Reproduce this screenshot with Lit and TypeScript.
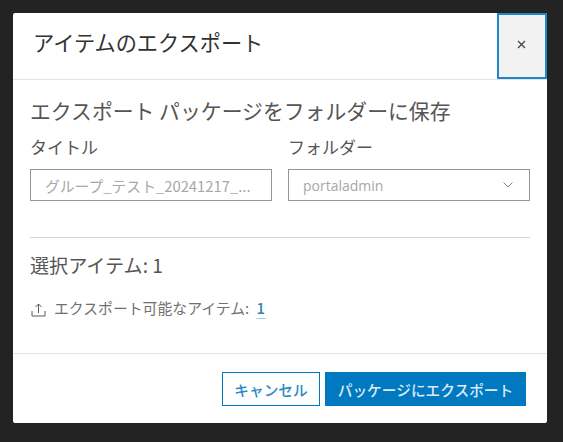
import { LitElement, html, css } from "lit";
import { customElement } from "lit/decorators.js";

@customElement("app-root")
export class AppRoot extends LitElement {
  static styles = css`
    :host {
      display: block;
      width: 563px;
      height: 442px;
      box-sizing: border-box;
      background: #232323;
      padding: 13px 16px 19px 13px;
      font-family: "Noto Sans CJK JP", "Noto Sans", sans-serif;
      color: #4a4a4a;
    }
    .dialog {
      height: 100%;
      background: #fff;
      border-radius: 2px;
      display: flex;
      flex-direction: column;
    }
    .header {
      display: flex;
      height: 66px;
      flex: none;
      border-bottom: 1px solid #e4e4e4;
    }
    .title {
      flex: 1;
      padding: 11px 0 0 20px;
      font-size: 21.2px;
      line-height: 36px;
      color: #323232;
    }
    .close {
      width: 50px;
      height: 66px;
      box-sizing: border-box;
      border: 2px solid #1f86c8;
      background: #f2f2f2;
      display: flex;
      align-items: center;
      justify-content: center;
      padding: 0 2px 4px 0;
    }
    .body {
      flex: 1;
      padding: 16px 17px 0 17px;
      display: flex;
      flex-direction: column;
      border-bottom: 1px solid #e4e4e4;
    }
    h2 {
      margin: 0;
      font-size: 20.85px;
      line-height: 28px;
      font-weight: 400;
      color: #555;
    }
    .fields {
      display: grid;
      grid-template-columns: 242px 242px;
      gap: 16px;
      margin-top: 11px;
    }
    label {
      display: block;
      font-size: 17px;
      line-height: 24px;
      color: #555;
      margin-bottom: 10px;
    }
    .box {
      height: 32px;
      box-sizing: border-box;
      border: 1px solid #959595;
      display: flex;
      align-items: center;
      justify-content: space-between;
      padding: 0 16px 0 14px;
      font-size: 14.8px;
      color: #a8a8a8;
      white-space: nowrap;
    }
    .box.latin {
      font-size: 14px;
      font-family: "Open Sans", "Noto Sans", sans-serif;
    }
    .rule {
      height: 0;
      border-top: 1.5px solid #d4d4d4;
      margin-top: 36px;
    }
    .count {
      font-size: 19.1px;
      line-height: 26px;
      margin-top: 14px;
      color: #555;
    }
    .exportable {
      display: flex;
      align-items: center;
      gap: 8px;
      margin-top: 20px;
      font-size: 14.85px;
      line-height: 20px;
      color: #707070;
    }
    .exportable svg {
      margin: 2px 0 0 1px;
      flex: none;
    }
    .link {
      color: #2f7fb8;
      font-weight: 500;
      border-bottom: 1px solid #a9cde5;
      padding: 0 1px;
      margin-left: 3px;
      line-height: 20px;
    }
    .footer {
      flex: none;
      height: 69px;
      box-sizing: border-box;
      padding: 18px 21px 0 0;
      display: flex;
      justify-content: flex-end;
      gap: 5px;
    }
    button {
      height: 34px;
      box-sizing: border-box;
      font-family: inherit;
      font-size: 14.7px;
      font-weight: 500;
      border: 1px solid #0079c1;
      padding: 0;
    }
    .cancel {
      width: 98px;
      background: #fff;
      color: #2b8ac6;
      border-width: 1.5px;
    }
    .primary {
      width: 201px;
      background: #0079c1;
      color: #dcebf5;
    }
  `;

  render() {
    return html`
      <div class="dialog">
        <div class="header">
          <div class="title">アイテムのエクスポート</div>
          <div class="close">
            <svg width="9" height="9" viewBox="0 0 9 9" fill="none" stroke="#444" stroke-width="1.3">
              <path d="M1 1l7 7M8 1L1 8" />
            </svg>
          </div>
        </div>
        <div class="body">
          <h2>エクスポート パッケージをフォルダーに保存</h2>
          <div class="fields">
            <div>
              <label>タイトル</label>
              <div class="box">グループ_テスト_20241217_...</div>
            </div>
            <div>
              <label>フォルダー</label>
              <div class="box latin">
                portaladmin
                <svg width="10" height="6" viewBox="0 0 10 6" fill="none" stroke="#808080" stroke-width="1">
                  <path d="M.5.5L5 5 9.5.5" />
                </svg>
              </div>
            </div>
          </div>
          <div class="rule"></div>
          <div class="count">選択アイテム: 1</div>
          <div class="exportable">
            <svg width="15" height="15" viewBox="0 0 15 15" fill="none" stroke="#5a5a5a" stroke-width="1">
              <path d="M1 9v5h13V9M7.5 11V2M4.5 5l3-3 3 3" />
            </svg>
            <span>エクスポート可能なアイテム: <span class="link">1</span></span>
          </div>
        </div>
        <div class="footer">
          <button class="cancel">キャンセル</button>
          <button class="primary">パッケージにエクスポート</button>
        </div>
      </div>
    `;
  }
}
